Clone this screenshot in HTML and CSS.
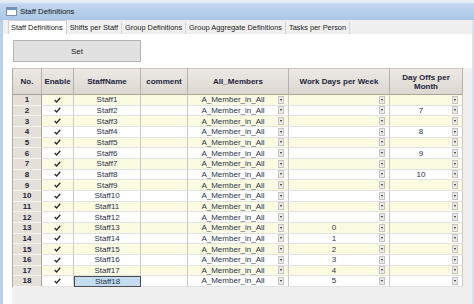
FILE: index.html
```html
<!DOCTYPE html>
<html>
<head>
<meta charset="utf-8">
<link rel="stylesheet" href="styles.css">
</head>
<body>
<div class="win">
  <div class="titlebar">
    <svg class="appicon" width="11" height="9" viewBox="0 0 11 9"><rect x="0.5" y="0.5" width="10" height="8" fill="#fff" stroke="#7d8fa8"/><rect x="1" y="1" width="9" height="2" fill="#6f93c7"/></svg>
    <span>Staff Definitions</span>
  </div>
  <div class="frame">
    <div class="tabs">
      <div class="tab active">Staff Definitions</div>
      <div class="tab">Shifts per Staff</div>
      <div class="tab">Group Definitions</div>
      <div class="tab">Group Aggregate Definitions</div>
      <div class="tab">Tasks per Person</div>
    </div>
    <div class="panel">
      <button class="setbtn">Set</button>
      <div class="gridarea">
        <div class="grid">
          <div class="row head">
            <div>No.</div><div>Enable</div><div>StaffName</div><div>comment</div><div>All_Members</div><div>Work Days per Week</div><div>Day Offs per<br>Month</div>
          </div>
          <div class="row odd"><div class="no">1</div><div class="en"><svg width="7" height="6" viewBox="0 0 7 6"><path d="M0.7 3 L2.6 5 L6.3 0.8" /></svg></div><div class="nm">Staff1</div><div></div><div class="dd"><span>A_Member_in_All</span><i></i></div><div class="dd"><span></span><i></i></div><div class="dd"><span></span><i></i></div></div>
          <div class="row even"><div class="no">2</div><div class="en"><svg width="7" height="6" viewBox="0 0 7 6"><path d="M0.7 3 L2.6 5 L6.3 0.8" /></svg></div><div class="nm">Staff2</div><div></div><div class="dd"><span>A_Member_in_All</span><i></i></div><div class="dd"><span></span><i></i></div><div class="dd"><span>7</span><i></i></div></div>
          <div class="row odd"><div class="no">3</div><div class="en"><svg width="7" height="6" viewBox="0 0 7 6"><path d="M0.7 3 L2.6 5 L6.3 0.8" /></svg></div><div class="nm">Staff3</div><div></div><div class="dd"><span>A_Member_in_All</span><i></i></div><div class="dd"><span></span><i></i></div><div class="dd"><span></span><i></i></div></div>
          <div class="row even"><div class="no">4</div><div class="en"><svg width="7" height="6" viewBox="0 0 7 6"><path d="M0.7 3 L2.6 5 L6.3 0.8" /></svg></div><div class="nm">Staff4</div><div></div><div class="dd"><span>A_Member_in_All</span><i></i></div><div class="dd"><span></span><i></i></div><div class="dd"><span>8</span><i></i></div></div>
          <div class="row odd"><div class="no">5</div><div class="en"><svg width="7" height="6" viewBox="0 0 7 6"><path d="M0.7 3 L2.6 5 L6.3 0.8" /></svg></div><div class="nm">Staff5</div><div></div><div class="dd"><span>A_Member_in_All</span><i></i></div><div class="dd"><span></span><i></i></div><div class="dd"><span></span><i></i></div></div>
          <div class="row even"><div class="no">6</div><div class="en"><svg width="7" height="6" viewBox="0 0 7 6"><path d="M0.7 3 L2.6 5 L6.3 0.8" /></svg></div><div class="nm">Staff6</div><div></div><div class="dd"><span>A_Member_in_All</span><i></i></div><div class="dd"><span></span><i></i></div><div class="dd"><span>9</span><i></i></div></div>
          <div class="row odd"><div class="no">7</div><div class="en"><svg width="7" height="6" viewBox="0 0 7 6"><path d="M0.7 3 L2.6 5 L6.3 0.8" /></svg></div><div class="nm">Staff7</div><div></div><div class="dd"><span>A_Member_in_All</span><i></i></div><div class="dd"><span></span><i></i></div><div class="dd"><span></span><i></i></div></div>
          <div class="row even"><div class="no">8</div><div class="en"><svg width="7" height="6" viewBox="0 0 7 6"><path d="M0.7 3 L2.6 5 L6.3 0.8" /></svg></div><div class="nm">Staff8</div><div></div><div class="dd"><span>A_Member_in_All</span><i></i></div><div class="dd"><span></span><i></i></div><div class="dd"><span>10</span><i></i></div></div>
          <div class="row odd"><div class="no">9</div><div class="en"><svg width="7" height="6" viewBox="0 0 7 6"><path d="M0.7 3 L2.6 5 L6.3 0.8" /></svg></div><div class="nm">Staff9</div><div></div><div class="dd"><span>A_Member_in_All</span><i></i></div><div class="dd"><span></span><i></i></div><div class="dd"><span></span><i></i></div></div>
          <div class="row even"><div class="no">10</div><div class="en"><svg width="7" height="6" viewBox="0 0 7 6"><path d="M0.7 3 L2.6 5 L6.3 0.8" /></svg></div><div class="nm">Staff10</div><div></div><div class="dd"><span>A_Member_in_All</span><i></i></div><div class="dd"><span></span><i></i></div><div class="dd"><span></span><i></i></div></div>
          <div class="row odd"><div class="no">11</div><div class="en"><svg width="7" height="6" viewBox="0 0 7 6"><path d="M0.7 3 L2.6 5 L6.3 0.8" /></svg></div><div class="nm">Staff11</div><div></div><div class="dd"><span>A_Member_in_All</span><i></i></div><div class="dd"><span></span><i></i></div><div class="dd"><span></span><i></i></div></div>
          <div class="row even"><div class="no">12</div><div class="en"><svg width="7" height="6" viewBox="0 0 7 6"><path d="M0.7 3 L2.6 5 L6.3 0.8" /></svg></div><div class="nm">Staff12</div><div></div><div class="dd"><span>A_Member_in_All</span><i></i></div><div class="dd"><span></span><i></i></div><div class="dd"><span></span><i></i></div></div>
          <div class="row odd"><div class="no">13</div><div class="en"><svg width="7" height="6" viewBox="0 0 7 6"><path d="M0.7 3 L2.6 5 L6.3 0.8" /></svg></div><div class="nm">Staff13</div><div></div><div class="dd"><span>A_Member_in_All</span><i></i></div><div class="dd"><span>0</span><i></i></div><div class="dd"><span></span><i></i></div></div>
          <div class="row even"><div class="no">14</div><div class="en"><svg width="7" height="6" viewBox="0 0 7 6"><path d="M0.7 3 L2.6 5 L6.3 0.8" /></svg></div><div class="nm">Staff14</div><div></div><div class="dd"><span>A_Member_in_All</span><i></i></div><div class="dd"><span>1</span><i></i></div><div class="dd"><span></span><i></i></div></div>
          <div class="row odd"><div class="no">15</div><div class="en"><svg width="7" height="6" viewBox="0 0 7 6"><path d="M0.7 3 L2.6 5 L6.3 0.8" /></svg></div><div class="nm">Staff15</div><div></div><div class="dd"><span>A_Member_in_All</span><i></i></div><div class="dd"><span>2</span><i></i></div><div class="dd"><span></span><i></i></div></div>
          <div class="row even"><div class="no">16</div><div class="en"><svg width="7" height="6" viewBox="0 0 7 6"><path d="M0.7 3 L2.6 5 L6.3 0.8" /></svg></div><div class="nm">Staff16</div><div></div><div class="dd"><span>A_Member_in_All</span><i></i></div><div class="dd"><span>3</span><i></i></div><div class="dd"><span></span><i></i></div></div>
          <div class="row odd"><div class="no">17</div><div class="en"><svg width="7" height="6" viewBox="0 0 7 6"><path d="M0.7 3 L2.6 5 L6.3 0.8" /></svg></div><div class="nm">Staff17</div><div></div><div class="dd"><span>A_Member_in_All</span><i></i></div><div class="dd"><span>4</span><i></i></div><div class="dd"><span></span><i></i></div></div>
          <div class="row even"><div class="no">18</div><div class="en"><svg width="7" height="6" viewBox="0 0 7 6"><path d="M0.7 3 L2.6 5 L6.3 0.8" /></svg></div><div class="nm sel">Staff18</div><div></div><div class="dd"><span>A_Member_in_All</span><i></i></div><div class="dd"><span>5</span><i></i></div><div class="dd"><span></span><i></i></div></div>
        </div>
      </div>
    </div>
  </div>
</div>
</body>
</html>
```
FILE: styles.css
```css
html, body { margin: 0; padding: 0; }
body {
  width: 474px; height: 304px; overflow: hidden; background: #fff;
  font-family: "Liberation Sans", Arial, sans-serif; color: #1a1a1a;
}
.win { height: 304px; display: flex; flex-direction: column; }
.titlebar {
  height: 20px; box-sizing: border-box; padding: 3px 0 0 6px;
  display: flex; align-items: center; gap: 3px;
  background: linear-gradient(#e6edf6 0, #e6edf6 2px, #c3d7ee 4px, #aac6e6 100%);
  font-size: 7.8px; color: #141414;
}
.appicon { display: block; }
.frame {
  flex: 1; display: flex; flex-direction: column; min-height: 0;
  border-left: 3px solid #b9d0ea; border-right: 2px solid #d8e3ef;
}
.tabs {
  height: 14px; background: #f0f0f0; display: flex; align-items: flex-end;
  padding-left: 5px; box-sizing: border-box;
}
.tab {
  font-size: 7.4px; height: 12px; line-height: 12px; padding: 0 3px;
  border-right: 1px solid #d4d4d4; white-space: nowrap; color: #1a1a1a;
}
.tab.active {
  background: #fff; height: 13px; line-height: 13px;
  border: 1px solid #d0d0d0; border-bottom: none; padding: 0 3px 0 2px;
}
.panel {
  flex: 1; display: flex; flex-direction: column; min-height: 0;
  padding: 6px 0 0 9px; background: #fff;
}
.setbtn {
  width: 128px; height: 22px; margin: 0 0 0 1px; padding: 0;
  background: #e1e1e1; border: 1px solid #b3b3b3; border-radius: 0;
  font-family: inherit; font-size: 8px; color: #1a1a1a;
}
.gridarea { flex: 1; margin-top: 6px; background: #f0f0f0; }
.grid {
  display: grid; width: 450px;
  grid-template-columns: 29px 32px 67px 47px 101px 101px 73px;
  grid-template-rows: 27px repeat(18, 10.67px);
  font-size: 8px;
  border-left: 1px solid #b0aaa2;
  box-sizing: border-box;
}
.row { display: contents; }
.row > div {
  box-sizing: border-box; border-right: 1px solid #c9c9c9; border-bottom: 1px solid #e2e2e2;
  display: flex; align-items: center; justify-content: center; overflow: hidden;
  color: #2b3350; line-height: 9px; white-space: nowrap;
}
.row.odd > div { background: #fbfbe2; }
.row.even > div { background: #fff; }
.row.head > div {
  background: linear-gradient(#ece9e4, #dcd7cf);
  border-top: 1px solid #cdc8c0; border-right: 1px solid #b7b1a8; border-bottom: 1px solid #aaa49b;
  font-weight: bold; color: #1c2440; text-align: center; white-space: normal;
}
.row > div.no {
  background: #e5e1d9; font-weight: bold; color: #1c2440;
  border-bottom: 1px solid #f5f3ef; border-right: 1px solid #a9a39a;
}
.en svg path { stroke: #2a2a2a; stroke-width: 1.3; fill: none; }
.row > div.dd { justify-content: flex-start; }
.dd span { flex: 1; text-align: center; }
.dd i {
  width: 6px; height: 8px; box-sizing: border-box; margin-right: 4px;
  border: 1px solid #c4c4c4; background: #ebebeb;
  display: flex; align-items: center; justify-content: center;
}
.dd i::after {
  content: ""; width: 0; height: 0;
  border-left: 1.5px solid transparent; border-right: 1.5px solid transparent;
  border-top: 2px solid #222;
}
.row.even > div.sel { background: #c3dcf2; border: 1px solid #4d4d4d; }
```
